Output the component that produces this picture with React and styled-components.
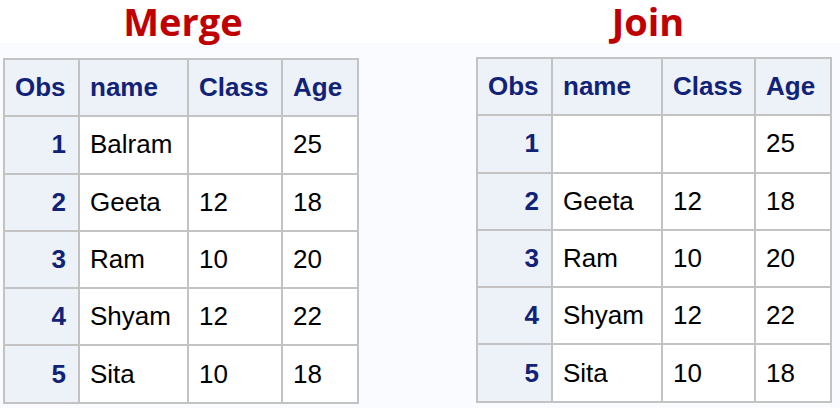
import React from "react";
import styled, { createGlobalStyle } from "styled-components";

const GlobalStyle = createGlobalStyle`
  html, body {
    margin: 0;
    padding: 0;
  }
  body {
    width: 840px;
    height: 408px;
    overflow: hidden;
    background: linear-gradient(to bottom, #ffffff 0, #ffffff 43px, #fafbfe 43px);
  }
`;

const Page = styled.div`
  display: flex;
  align-items: flex-start;
  gap: 119px;
  padding-left: 3px;
`;

const Column = styled.div`
  display: flex;
  flex-direction: column;
  width: 354px;
`;

const Title = styled.h1`
  margin: 0;
  height: 43px;
  font-family: "Open Sans", sans-serif;
  font-weight: 700;
  font-size: 38px;
  line-height: 43px;
  color: #c00000;
  text-align: center;
  padding-left: ${(p) => p.$left || 0}px;
  padding-right: ${(p) => p.$right || 0}px;
`;

const Table = styled.table`
  margin-top: ${(p) => p.$top}px;
  width: 354px;
  table-layout: fixed;
  border-collapse: collapse;
  font-family: "Liberation Sans", Arial, sans-serif;
  font-size: 26px;
  background: #ffffff;
  border: 2px solid #c3c3c3;
`;

const Row = styled.tr`
  height: 57.3px;
`;

const HeadCell = styled.th`
  border: 2px solid #c3c3c3;
  background: #edf2f9;
  color: #112277;
  font-weight: 700;
  text-align: left;
  padding: 0 10px;
  white-space: nowrap;
`;

const ObsCell = styled.th`
  border: 2px solid #c3c3c3;
  background: #edf2f9;
  color: #112277;
  font-weight: 700;
  text-align: right;
  padding: 0 12px;
`;

const Cell = styled.td`
  border: 2px solid #c3c3c3;
  color: #000000;
  text-align: left;
  padding: 0 10px;
  white-space: nowrap;
`;

const data = [
  { obs: 1, name: "Balram", cls: "", age: 25 },
  { obs: 2, name: "Geeta", cls: 12, age: 18 },
  { obs: 3, name: "Ram", cls: 10, age: 20 },
  { obs: 4, name: "Shyam", cls: 12, age: 22 },
  { obs: 5, name: "Sita", cls: 10, age: 18 },
];

const DataTable = ({ rows, widths, top }) => (
  <Table $top={top}>
    <colgroup>
      {widths.map((w, i) => (
        <col key={i} style={{ width: w }} />
      ))}
    </colgroup>
    <thead>
      <Row>
        <HeadCell>Obs</HeadCell>
        <HeadCell>name</HeadCell>
        <HeadCell>Class</HeadCell>
        <HeadCell>Age</HeadCell>
      </Row>
    </thead>
    <tbody>
      {rows.map((r) => (
        <Row key={r.obs}>
          <ObsCell>{r.obs}</ObsCell>
          <Cell>{r.name}</Cell>
          <Cell>{r.cls}</Cell>
          <Cell>{r.age}</Cell>
        </Row>
      ))}
    </tbody>
  </Table>
);

const joined = data.map((r) => (r.obs === 1 ? { ...r, name: "" } : r));

const App = () => (
  <>
    <GlobalStyle />
    <Page>
      <Column>
        <Title $left={6}>Merge</Title>
        <DataTable rows={data} widths={[75, 109, 94, 76]} top={15} />
      </Column>
      <Column>
        <Title $right={10}>Join</Title>
        <DataTable rows={joined} widths={[75, 110, 93, 76]} top={14} />
      </Column>
    </Page>
  </>
);

export default App;
